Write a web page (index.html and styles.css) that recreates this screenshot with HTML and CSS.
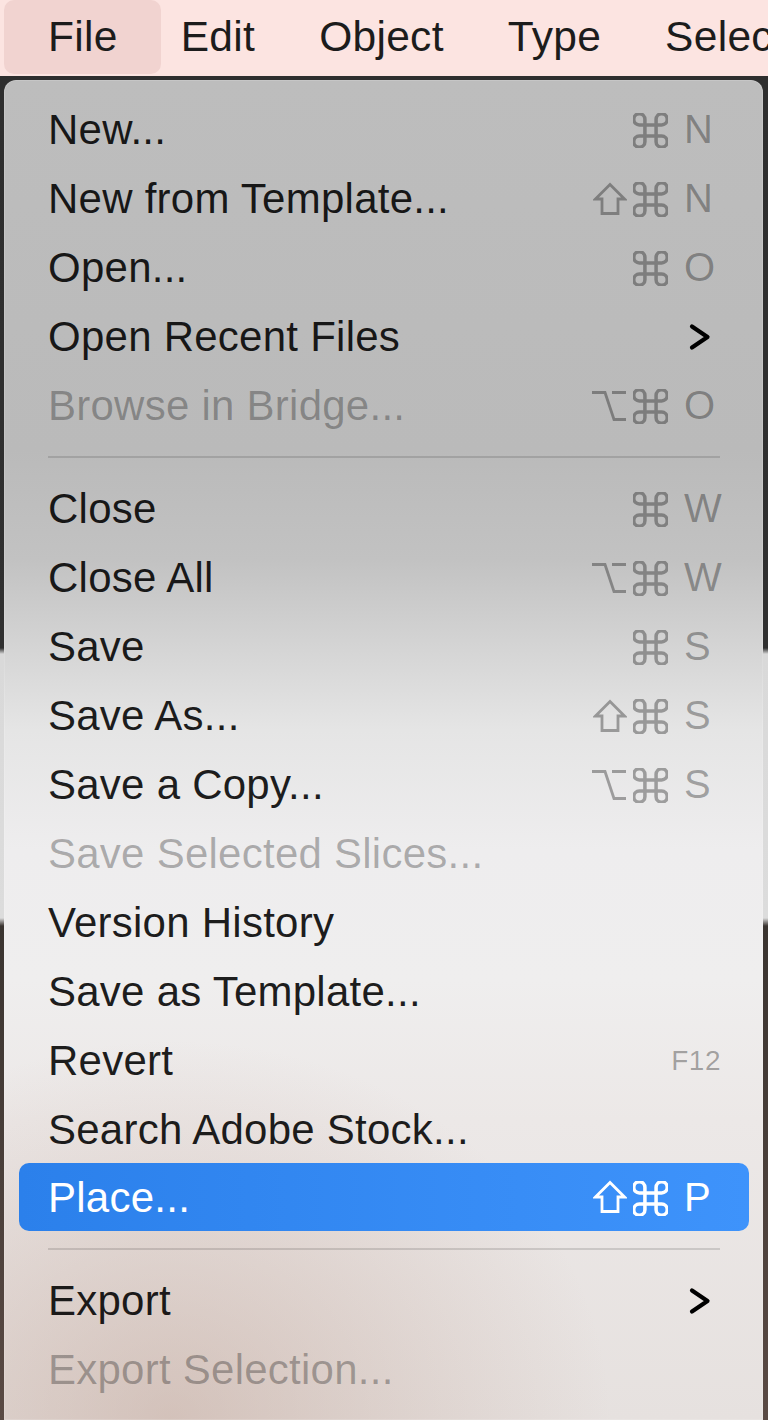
FILE: index.html
```html
<!DOCTYPE html>
<html>
<head>
<meta charset="utf-8">
<link rel="stylesheet" href="styles.css">
</head>
<body>
<svg width="0" height="0" class="defs">
  <defs>
    <symbol id="cmd" viewBox="2.6 2.6 18.8 18.8"><path d="M15 6v12a3 3 0 1 0 3-3H6a3 3 0 1 0 3 3V6a3 3 0 1 0-3 3h12a3 3 0 1 0-3-3" fill="none" stroke="currentColor" stroke-width="1.9" stroke-linecap="round" stroke-linejoin="round"/></symbol>
    <symbol id="shift" viewBox="0 0 34 34"><path d="M17 2.5 L2.5 17 H9 V31.5 H25 V17 H31.5 Z" fill="none" stroke="currentColor" stroke-width="2.8" stroke-linejoin="miter"/></symbol>
    <symbol id="opt" viewBox="0 0 36 34"><path d="M1 3.5 H14 L23 30.5 H35 M21 3.5 H35" fill="none" stroke="currentColor" stroke-width="2.8"/></symbol>
    <symbol id="chev" viewBox="0 0 24 28"><path d="M4 3.5 L19.5 14 L4 24.5" fill="none" stroke="currentColor" stroke-width="4.2" stroke-linecap="round" stroke-linejoin="round"/></symbol>
  </defs>
</svg>

<header class="menubar">
  <span class="mb-item active">File</span>
  <span class="mb-item">Edit</span>
  <span class="mb-item">Object</span>
  <span class="mb-item">Type</span>
  <span class="mb-item last">Select</span>
</header>

<div class="stage">
  <div class="menu">
    <div class="row"><span class="label">New...</span><span class="keys"><span class="mods"><svg class="ic-cmd"><use href="#cmd"/></svg></span><span class="key">N</span></span></div>
    <div class="row"><span class="label">New from Template...</span><span class="keys"><span class="mods"><svg class="ic-shift"><use href="#shift"/></svg><svg class="ic-cmd"><use href="#cmd"/></svg></span><span class="key">N</span></span></div>
    <div class="row"><span class="label">Open...</span><span class="keys"><span class="mods"><svg class="ic-cmd"><use href="#cmd"/></svg></span><span class="key">O</span></span></div>
    <div class="row"><span class="label">Open Recent Files</span><span class="keys"><span class="key sub"><svg class="ic-chev"><use href="#chev"/></svg></span></span></div>
    <div class="row disabled"><span class="label">Browse in Bridge...</span><span class="keys"><span class="mods"><svg class="ic-opt"><use href="#opt"/></svg><svg class="ic-cmd"><use href="#cmd"/></svg></span><span class="key">O</span></span></div>
    <div class="sep"></div>
    <div class="row"><span class="label">Close</span><span class="keys"><span class="mods"><svg class="ic-cmd"><use href="#cmd"/></svg></span><span class="key">W</span></span></div>
    <div class="row"><span class="label">Close All</span><span class="keys"><span class="mods"><svg class="ic-opt"><use href="#opt"/></svg><svg class="ic-cmd"><use href="#cmd"/></svg></span><span class="key">W</span></span></div>
    <div class="row"><span class="label">Save</span><span class="keys"><span class="mods"><svg class="ic-cmd"><use href="#cmd"/></svg></span><span class="key">S</span></span></div>
    <div class="row"><span class="label">Save As...</span><span class="keys"><span class="mods"><svg class="ic-shift"><use href="#shift"/></svg><svg class="ic-cmd"><use href="#cmd"/></svg></span><span class="key">S</span></span></div>
    <div class="row"><span class="label">Save a Copy...</span><span class="keys"><span class="mods"><svg class="ic-opt"><use href="#opt"/></svg><svg class="ic-cmd"><use href="#cmd"/></svg></span><span class="key">S</span></span></div>
    <div class="row disabled"><span class="label">Save Selected Slices...</span></div>
    <div class="row"><span class="label">Version History</span></div>
    <div class="row"><span class="label">Save as Template...</span></div>
    <div class="row"><span class="label">Revert</span><span class="keys"><span class="fkey">F12</span></span></div>
    <div class="row"><span class="label">Search Adobe Stock...</span></div>
    <div class="row active"><span class="label">Place...</span><span class="keys"><span class="mods"><svg class="ic-shift"><use href="#shift"/></svg><svg class="ic-cmd"><use href="#cmd"/></svg></span><span class="key">P</span></span></div>
    <div class="sep"></div>
    <div class="row"><span class="label">Export</span><span class="keys"><span class="key sub"><svg class="ic-chev"><use href="#chev"/></svg></span></span></div>
    <div class="row disabled"><span class="label">Export Selection...</span></div>
  </div>
</div>
</body>
</html>
```

FILE: styles.css
```css
html, body {
  margin: 0;
  padding: 0;
}
body {
  width: 768px;
  height: 1420px;
  overflow: hidden;
  font-family: "Liberation Sans", Arial, sans-serif;
  background: #2f2f2f;
}
.defs {
  position: absolute;
  width: 0;
  height: 0;
}
.menubar {
  height: 76px;
  display: flex;
  align-items: flex-start;
  padding-left: 4px;
  background: #fce4e1;
  white-space: nowrap;
  overflow: hidden;
}
.mb-item {
  font-size: 42.5px;
  letter-spacing: 0.3px;
  line-height: 74px;
  height: 74px;
  padding: 0 32px;
  color: #1c1c1c;
  flex: none;
}
.mb-item.active {
  padding: 0 43px 0 44px;
  margin-right: -12px;
  background: #f1d3d0;
  border-radius: 10px;
}
.mb-item.last {
  padding-right: 0;
}
.stage {
  height: 1344px;
  padding: 4px 5px 0 4px;
  background: linear-gradient(to bottom, #2e2e2e 0, #303030 572px, #d9d9d9 578px, #dcdcdc 842px, #3a3430 850px, #5a4a44 1344px);
}
.menu {
  height: 1340px;
  box-sizing: border-box;
  padding-top: 15px;
  border-radius: 12px 12px 0 0;
  background:
    radial-gradient(ellipse 440px 380px at 22% 100%, rgba(185, 150, 135, 0.42), rgba(185, 150, 135, 0) 100%),
    linear-gradient(to bottom, #bdbdbd 0, #bababa 370px, #c2c2c2 480px, #d5d5d5 570px, #e5e5e5 650px, #eeedee 770px, #efeeee 900px, #ece8e7 1040px, #e6e1df 1340px);
  box-shadow: inset 0 0 0 1px rgba(255, 255, 255, 0.15);
}
.row {
  height: 69px;
  margin: 0 14px 0 15px;
  padding: 0 21px 0 29px;
  display: flex;
  align-items: center;
  border-radius: 10px;
  color: rgba(0, 0, 0, 0.88);
  font-size: 42px;
  white-space: nowrap;
}
.label {
  flex: 1;
  line-height: 69px;
  letter-spacing: 0.25px;
}
.row.disabled {
  color: rgba(0, 0, 0, 0.29);
}
.row.active {
  height: 68px;
  margin-top: -1px;
  margin-bottom: 1px;
  background: linear-gradient(to right, #2b80eb, #3e93fb);
  color: #ffffff;
}
.keys {
  display: flex;
  align-items: center;
  color: rgba(0, 0, 0, 0.33);
}
.row.active .keys {
  color: #ffffff;
}
.mods {
  display: flex;
  align-items: center;
  gap: 6px;
}
.key {
  width: 44px;
  margin-left: 16px;
  line-height: 69px;
  font-size: 40px;
}
.key.sub {
  display: flex;
  align-items: center;
  color: #000000;
  margin-left: 20px;
  width: 40px;
}
.fkey {
  font-size: 28px;
  margin-right: 7px;
  letter-spacing: 0.5px;
}
.ic-cmd {
  width: 35px;
  height: 35px;
  margin-top: 2px;
}
.ic-shift {
  width: 34px;
  height: 34px;
}
.ic-opt {
  width: 36px;
  height: 34px;
}
.ic-chev {
  width: 24px;
  height: 28px;
}
.sep {
  height: 34px;
  margin: 0 43px 0 44px;
  display: flex;
  align-items: center;
}
.sep::before {
  content: "";
  flex: 1;
  height: 2px;
  background: rgba(0, 0, 0, 0.13);
}
```
